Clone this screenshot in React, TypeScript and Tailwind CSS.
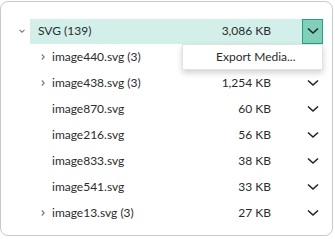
import { ReactNode } from 'react';

type Row = {
  name: string;
  size: string;
  level: 0 | 1;
  expander?: 'open' | 'closed';
  selected?: boolean;
  covered?: boolean;
};

const ROWS: Row[] = [
  { name: 'SVG (139)', size: '3,086 KB', level: 0, expander: 'open', selected: true },
  // size and menu button sit under the context menu
  { name: 'image440.svg (3)', size: '', level: 1, expander: 'closed', covered: true },
  { name: 'image438.svg (3)', size: '1,254 KB', level: 1, expander: 'closed' },
  { name: 'image870.svg', size: '60 KB', level: 1 },
  { name: 'image216.svg', size: '56 KB', level: 1 },
  { name: 'image833.svg', size: '38 KB', level: 1 },
  { name: 'image541.svg', size: '33 KB', level: 1 },
  { name: 'image13.svg (3)', size: '27 KB', level: 1, expander: 'closed' },
];

function TreeChevron({ open }: { open: boolean }) {
  return (
    <svg width="8" height="8" viewBox="0 0 8 8" className="shrink-0">
      {open ? (
        <path d="M1.5 2.8 L4 5.2 L6.5 2.8" fill="none" stroke="#7a7a7a" strokeWidth="1.1" />
      ) : (
        <path d="M2.8 1.5 L5.2 4 L2.8 6.5" fill="none" stroke="#7a7a7a" strokeWidth="1.1" />
      )}
    </svg>
  );
}

function DownChevron() {
  return (
    <svg width="12" height="8" viewBox="0 0 12 8">
      <path d="M1 1.5 L6 6 L11 1.5" fill="none" stroke="#242424" strokeWidth="1.6" />
    </svg>
  );
}

function TreeRow({ row }: { row: Row }) {
  let name: ReactNode;
  if (row.level === 0) {
    name = <span className="pl-[4px]">{row.name}</span>;
  } else {
    name = (
      <>
        <span className="flex w-[18px] shrink-0 items-center pl-[5px]">
          {row.expander && <TreeChevron open={false} />}
        </span>
        <span>{row.name}</span>
      </>
    );
  }

  return (
    <div className="flex h-[26px] items-center">
      <div className="flex w-[29px] shrink-0 justify-end pr-[4px]">
        {row.level === 0 && <TreeChevron open={row.expander === 'open'} />}
      </div>
      <div
        className={`flex h-[25px] flex-1 items-center pl-[4px] pr-[31px] ${row.selected ? 'bg-[#d3efe9]' : ''}`}
      >
        <div className="flex flex-1 items-center">{name}</div>
        <span>{row.size}</span>
      </div>
      <button
        type="button"
        className={`flex h-[25px] w-[21px] shrink-0 items-center justify-center ${row.selected ? 'border border-[#25a184] bg-[#7fcfba]' : ''}`}
      >
        {!row.covered && <DownChevron />}
      </button>
      <div className="w-[9px] shrink-0" />
    </div>
  );
}

export default function App() {
  return (
    <div className="bg-white pt-px">
      <div className="relative h-[235px] w-[333px] rounded-[8px] border border-[#c9c9c9] bg-white pt-[16px] font-['Lato',sans-serif] text-[12px] text-[#2b2b2b]">
        {ROWS.map((row) => (
          <TreeRow key={row.name} row={row} />
        ))}

        {/* context menu over the second row */}
        <div className="absolute left-[181px] top-[42px] flex h-[26px] w-[141px] items-center border border-[#e3e3e3] bg-white pl-[33px] shadow-[0_3px_6px_rgba(0,0,0,0.18)]">
          Export Media...
        </div>
      </div>
    </div>
  );
}
